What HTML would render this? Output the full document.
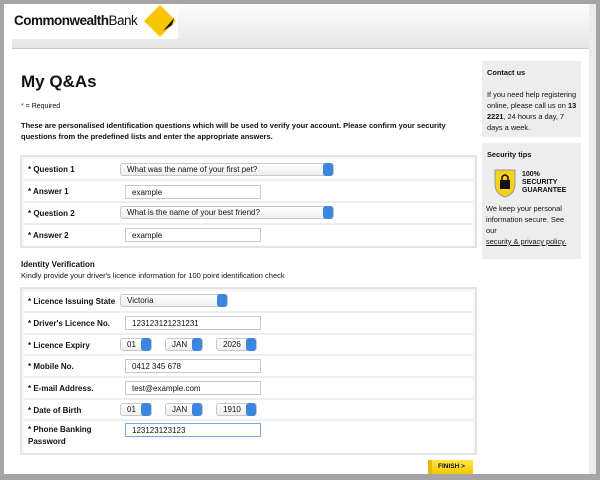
<!DOCTYPE html>
<html><head><style>
*{margin:0;padding:0;box-sizing:border-box}
body{width:600px;height:480px;background:#a5a5a5;position:relative;overflow:hidden;font-family:"Liberation Sans",Arial,sans-serif;color:#111}
.abs{position:absolute}
.page{left:4px;top:4px;width:585px;height:470px;background:#fff}
.strip{left:589px;top:4px;width:7px;height:470px;background:#ececec}
.hdr{left:12px;top:4px;width:577px;height:45px;background:linear-gradient(#fdfdfd,#e6e6e6);border-bottom:1px solid #ccc}
.logo{left:12px;top:4px;width:166px;height:35px;background:#fff}
.box{background:#f6f6f6;border:2px solid #e4e4e4}
.row{position:absolute;left:2px;right:2px;background:#fff;border-bottom:2px solid #eee;font-size:8px;font-weight:bold}
.row .l{position:absolute;left:4px}
.inp{position:absolute;height:14px;border:1px solid #c8c8c8;background:#fff;font-size:8px;font-weight:normal;padding:2px 6px;line-height:9px}
.sel{position:absolute;height:13px;border:1px solid #c8c8c8;border-radius:3px;background:linear-gradient(#fff,#eee);font-size:8px;font-weight:normal;padding:1px 6px;line-height:10px}
.sel:after{content:"";position:absolute;right:0;top:-1px;width:10px;height:13px;background:#3d86e0;border-radius:3px}
.side{background:#ededed;font-size:7.4px;line-height:11px;padding:6px 2px 6px 5px;white-space:nowrap;overflow:hidden}
</style></head><body>
<div class="abs page"></div>
<div class="abs strip"></div>
<div class="abs hdr"></div>
<div class="abs logo">
<div class="abs" style="left:2px;top:9px;font-size:13.5px;letter-spacing:-0.5px"><b>Commonwealth</b>Bank</div>
<svg class="abs" style="left:131px;top:0px" width="34" height="34" viewBox="0 0 34 34"><polygon points="17,1 33,17 17,33 1,17" fill="#f7c600"/><path d="M20,27 L31,14 L29,21 Z" fill="#111"/></svg>
</div>
<div class="abs" style="left:21px;top:72px;font-size:17px;font-weight:bold">My Q&amp;As</div>
<div class="abs" style="left:21px;top:103px;font-size:7px"><span style="color:#d00">*</span> = Required</div>
<div class="abs" style="left:21px;top:120px;font-size:7.5px;font-weight:bold;line-height:11px;width:450px">These are personalised identification questions which will be used to verify your account. Please confirm your security questions from the predefined lists and enter the appropriate answers.</div>

<div class="abs box" style="left:20px;top:155px;width:457px;height:93px">
<div class="row" style="top:2px;height:22px"><span class="l" style="top:6px">* Question 1</span><div class="sel" style="left:96px;top:4px;width:214px">What was the name of your first pet?</div></div>
<div class="row" style="top:24px;height:22px"><span class="l" style="top:6px">* Answer 1</span><div class="inp" style="left:101px;top:4px;width:136px">example</div></div>
<div class="row" style="top:46px;height:22px"><span class="l" style="top:6px">* Question 2</span><div class="sel" style="left:96px;top:3px;width:214px">What is the name of your best friend?</div></div>
<div class="row" style="top:68px;height:21px;border:0"><span class="l" style="top:6px">* Answer 2</span><div class="inp" style="left:101px;top:3px;width:136px">example</div></div>
</div>

<div class="abs" style="left:21px;top:260px;font-size:8px;font-weight:bold">Identity Verification</div>
<div class="abs" style="left:21px;top:271px;font-size:7.5px">Kindly provide your driver's licence information for 100 point identification check</div>

<div class="abs box" style="left:20px;top:287px;width:457px;height:168px">
<div class="row" style="top:2px;height:22px"><span class="l" style="top:6px">* Licence Issuing State</span><div class="sel" style="left:96px;top:3px;width:108px">Victoria</div></div>
<div class="row" style="top:24px;height:22px"><span class="l" style="top:6px">* Driver's Licence No.</span><div class="inp" style="left:101px;top:3px;width:136px">123123121231231</div></div>
<div class="row" style="top:46px;height:21px"><span class="l" style="top:6px">* Licence Expiry</span><div class="sel" style="left:96px;top:3px;width:32px">01</div><div class="sel" style="left:141px;top:3px;width:38px">JAN</div><div class="sel" style="left:192px;top:3px;width:41px">2026</div></div>
<div class="row" style="top:67px;height:22px"><span class="l" style="top:6px">* Mobile No.</span><div class="inp" style="left:101px;top:3px;width:136px">0412 345 678</div></div>
<div class="row" style="top:89px;height:22px"><span class="l" style="top:6px">* E-mail Address.</span><div class="inp" style="left:101px;top:3px;width:136px">test@example.com</div></div>
<div class="row" style="top:111px;height:21px"><span class="l" style="top:6px">* Date of Birth</span><div class="sel" style="left:96px;top:3px;width:32px">01</div><div class="sel" style="left:141px;top:3px;width:38px">JAN</div><div class="sel" style="left:192px;top:3px;width:41px">1910</div></div>
<div class="row" style="top:132px;height:32px;border:0"><span class="l" style="top:3px;line-height:12px">* Phone Banking<br>Password</span><div class="inp" style="left:101px;top:2px;width:136px;border-color:#7aa7e0">123123123123</div></div>
</div>

<div class="abs" style="left:428px;top:460px;width:45px;height:14px;background:linear-gradient(#ffe44a,#f5c800);border-left:4px solid #e6b800;font-size:6.5px;font-weight:bold;line-height:14px;padding-left:6px">FINISH &gt;</div>

<div class="abs side" style="left:482px;top:61px;width:99px;height:76px"><b>Contact us</b><div style="margin-top:11px">If you need help registering<br>online, please call us on <b>13</b><br><b>2221</b>, 24 hours a day, 7<br>days a week.</div></div>
<div class="abs side" style="left:482px;top:143px;width:99px;height:116px"><b>Security tips</b>
<svg class="abs" style="left:12px;top:25px" width="22" height="30" viewBox="0 0 22 30"><path d="M1,2 L21,2 L21,16 Q21,26 11,29 Q1,26 1,16 Z" fill="#f2d21a" stroke="#999"/><rect x="6" y="12" width="10" height="9" fill="#111"/><path d="M8,12 V9 Q11,5 14,9 V12" fill="none" stroke="#111" stroke-width="1.5"/></svg>
<div class="abs" style="left:40px;top:28px;font-size:7px;font-weight:bold;line-height:8px">100%<br>SECURITY<br>GUARANTEE</div>
<div class="abs" style="left:4px;top:60px">We keep your personal<br>information secure. See<br>our<br><u>security &amp; privacy policy.</u></div>
</div>
</body></html>
